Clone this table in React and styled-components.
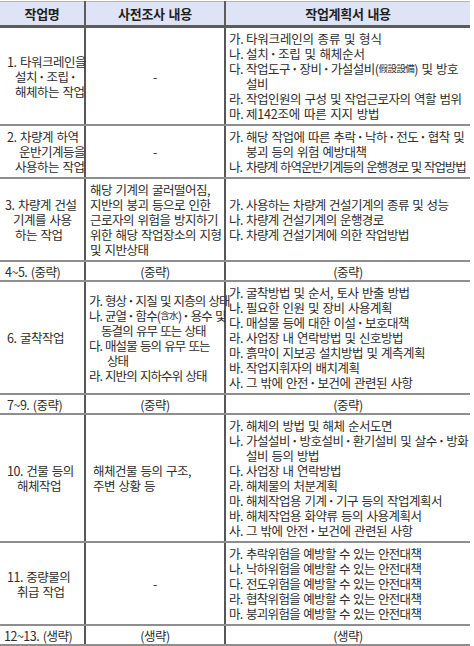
import React from "react";
import styled, { createGlobalStyle } from "styled-components";

const GlobalStyle = createGlobalStyle`
  html, body { margin: 0; padding: 0; background: #fff; }
  * { box-sizing: border-box; }
`;

const Table = styled.table`
  width: 470px;
  margin-top: 1px;
  border-collapse: collapse;
  table-layout: fixed;
  font-family: "Noto Sans CJK KR", "Noto Sans", sans-serif;
  font-size: 12.5px;
  letter-spacing: -0.5px;
  word-spacing: 1.2px;
  line-height: 15px;
  color: #2d2d2d;
  border-top: 1px solid #b4b4b4;
`;

const HeadCell = styled.th`
  height: 25px;
  padding: 0;
  background: #dee4f6;
  font-weight: 700;
  font-size: 13px;
  letter-spacing: -0.3px;
  color: #1f1f1f;
  text-align: center;
  vertical-align: middle;
  border-bottom: 3px solid #5c5c5c;
  border-left: ${(p) => (p.$first ? "none" : "2px solid #5c5c5c")};
`;

const Cell = styled.td`
  padding: ${(p) => (p.$compact ? "1.5px 3px" : "3px 3px")};
  vertical-align: middle;
  text-align: ${(p) => p.$align || "left"};
  border-bottom: 2px solid #8e8e8e;
  border-left: ${(p) => (p.$first ? "none" : "2px solid #575757")};
  white-space: nowrap;
`;

const Line = styled.div`
  height: 15px;
  line-height: 15px;
  padding-left: ${(p) => p.$pad || 0}px;
  ${(p) => (p.$ls != null ? `letter-spacing: ${p.$ls}px;` : "")}
`;

const Label = styled.span`
  display: inline-block;
  vertical-align: top;
  width: ${(p) => p.$w}px;
`;

const Dot = styled.span`
  margin: 0 1px;
  font-weight: 700;
  letter-spacing: 0;
`;

const Hanja = styled.span`
  font-size: 9.5px;
  letter-spacing: -0.6px;
  vertical-align: top;
`;

function rich(text) {
  const parts = text.split(/(・|[\u4e00-\u9fff]+)/);
  return parts.map((p, i) => {
    if (p === "・") return <Dot key={i}>·</Dot>;
    if (/^[\u4e00-\u9fff]+$/.test(p)) return <Hanja key={i}>{p}</Hanja>;
    return <React.Fragment key={i}>{p}</React.Fragment>;
  });
}

// item: { l: label, t: first line, more: [continuation lines], ls: letter-spacing, cp: continuation pad }
function Items({ items, labelW, contPad, ls }) {
  return items.map((it, i) => (
    <React.Fragment key={i}>
      <Line $ls={it.ls ?? ls}>
        <Label $w={labelW}>{it.l}</Label>
        {rich(it.t)}
      </Line>
      {(it.more || []).map((c, j) => (
        <Line key={j} $ls={it.ls ?? ls} $pad={it.cp ?? contPad}>
          {rich(c)}
        </Line>
      ))}
    </React.Fragment>
  ));
}

function Plain({ lines, pad }) {
  return lines.map((l, i) => (
    <Line key={i} $pad={pad}>
      {rich(l)}
    </Line>
  ));
}

const rows = [
  {
    name: [["1. 타워크레인을", 4], ["설치・조립・", 12], ["해체하는 작업", 12]],
    survey: { dash: true },
    plan: [
      { l: "가.", t: "타워크레인의 종류 및 형식", ls: -0.2 },
      { l: "나.", t: "설치・조립 및 해체순서", ls: -0.2 },
      { l: "다.", t: "작업도구・장비・가설설비(假設設備) 및 방호", more: ["설비"] },
      { l: "라.", t: "작업인원의 구성 및 작업근로자의 역할 범위" },
      { l: "마.", t: "제142조에 따른 지지 방법", ls: -0.2 },
    ],
  },
  {
    name: [["2. 차량계 하역", 4], ["운반기계등을", 16], ["사용하는 작업", 12]],
    survey: { dash: true },
    plan: [
      { l: "가.", t: "해당 작업에 따른 추락・낙하・전도・협착 및", more: ["붕괴 등의 위험 예방대책"] },
      { l: "나.", t: "차량계 하역운반기계등의 운행경로 및 작업방법", ls: -1.1 },
    ],
  },
  {
    name: [["3. 차량계 건설", 2], ["기계를 사용", 10], ["하는 작업", 12]],
    survey: {
      plain: [
        "해당 기계의 굴러떨어짐,",
        "지반의 붕괴 등으로 인한",
        "근로자의 위험을 방지하기",
        "위한 해당 작업장소의 지형",
        "및 지반상태",
      ],
      pad: 1,
    },
    plan: [
      { l: "가.", t: "사용하는 차량계 건설기계의 종류 및 성능", ls: -0.6 },
      { l: "나.", t: "차량계 건설기계의 운행경로", ls: -0.6 },
      { l: "다.", t: "차량계 건설기계에 의한 작업방법", ls: -0.6 },
    ],
  },
  { compact: true, name: [["4~5. (중략)", 2]], surveyText: "(중략)", planText: "(중략)" },
  {
    name: [["6. 굴착작업", 4]],
    survey: {
      ls: -0.9,
      items: [
        { l: "가.", t: "형상・지질 및 지층의 상태" },
        { l: "나.", t: "균열・함수(含水)・용수 및", more: ["동결의 유무 또는 상태"] },
        { l: "다.", t: "매설물 등의 유무 또는", more: ["상태"], cp: 18 },
        { l: "라.", t: "지반의 지하수위 상태" },
      ],
    },
    plan: [
      { l: "가.", t: "굴착방법 및 순서, 토사 반출 방법" },
      { l: "나.", t: "필요한 인원 및 장비 사용계획" },
      { l: "다.", t: "매설물 등에 대한 이설・보호대책" },
      { l: "라.", t: "사업장 내 연락방법 및 신호방법" },
      { l: "마.", t: "흙막이 지보공 설치방법 및 계측계획" },
      { l: "바.", t: "작업지휘자의 배치계획" },
      { l: "사.", t: "그 밖에 안전・보건에 관련된 사항" },
    ],
  },
  { compact: true, name: [["7~9. (중략)", 4]], surveyText: "(중략)", planText: "(중략)" },
  {
    name: [["10. 건물 등의", 4], ["해체작업", 14]],
    survey: { plain: ["해체건물 등의 구조,", "주변 상황 등"], pad: 4 },
    plan: [
      { l: "가.", t: "해체의 방법 및 해체 순서도면" },
      { l: "나.", t: "가설설비・방호설비・환기설비 및 살수・방화", more: ["설비 등의 방법"] },
      { l: "다.", t: "사업장 내 연락방법" },
      { l: "라.", t: "해체물의 처분계획" },
      { l: "마.", t: "해체작업용 기계・기구 등의 작업계획서" },
      { l: "바.", t: "해체작업용 화약류 등의 사용계획서" },
      { l: "사.", t: "그 밖에 안전・보건에 관련된 사항" },
    ],
  },
  {
    name: [["11. 중량물의", 4], ["취급 작업", 14]],
    survey: { dash: true },
    plan: [
      { l: "가.", t: "추락위험을 예방할 수 있는 안전대책", ls: -0.7 },
      { l: "나.", t: "낙하위험을 예방할 수 있는 안전대책", ls: -0.7 },
      { l: "다.", t: "전도위험을 예방할 수 있는 안전대책", ls: -0.7 },
      { l: "라.", t: "협착위험을 예방할 수 있는 안전대책", ls: -0.7 },
      { l: "마.", t: "붕괴위험을 예방할 수 있는 안전대책", ls: -0.7 },
    ],
  },
  { compact: true, name: [["12~13. (생략)", 1]], surveyText: "(생략)", planText: "(생략)" },
];

export default function App() {
  return (
    <>
      <GlobalStyle />
      <Table>
        <colgroup>
          <col style={{ width: 85 }} />
          <col style={{ width: 140 }} />
          <col style={{ width: 245 }} />
        </colgroup>
        <thead>
          <tr>
            <HeadCell $first>작업명</HeadCell>
            <HeadCell>사전조사 내용</HeadCell>
            <HeadCell>작업계획서 내용</HeadCell>
          </tr>
        </thead>
        <tbody>
          {rows.map((r, i) => (
            <tr key={i}>
              <Cell $first $compact={r.compact}>
                {r.name.map(([n, pad], j) => (
                  <Line key={j} $pad={pad}>
                    {rich(n)}
                  </Line>
                ))}
              </Cell>
              {r.compact ? (
                <>
                  <Cell $compact $align="center">{r.surveyText}</Cell>
                  <Cell $compact $align="center">{r.planText}</Cell>
                </>
              ) : (
                <>
                  <Cell $align={r.survey.dash ? "center" : "left"}>
                    {r.survey.dash && "-"}
                    {r.survey.plain && <Plain lines={r.survey.plain} pad={r.survey.pad} />}
                    {r.survey.items && (
                      <Items items={r.survey.items} labelW={16} contPad={12} ls={r.survey.ls} />
                    )}
                  </Cell>
                  <Cell>
                    <Items items={r.plan} labelW={17} contPad={17} />
                  </Cell>
                </>
              )}
            </tr>
          ))}
        </tbody>
      </Table>
    </>
  );
}
